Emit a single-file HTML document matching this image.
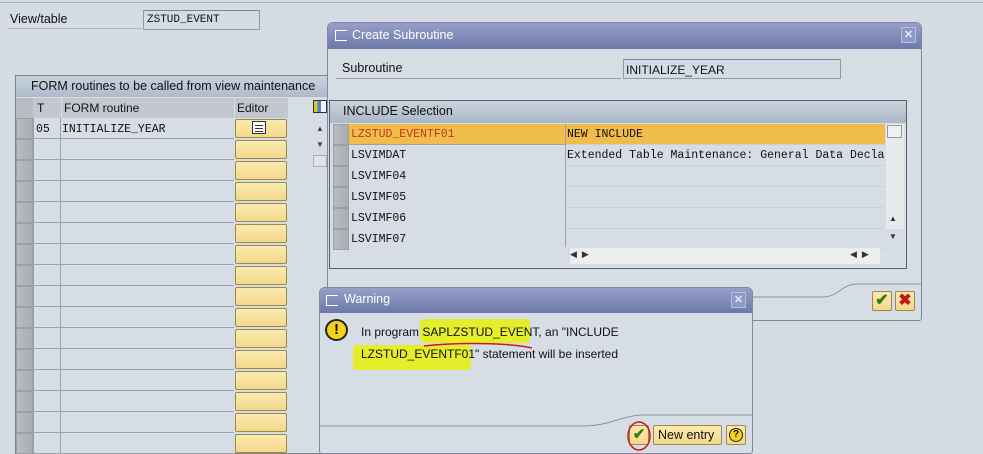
<!DOCTYPE html>
<html><head><style>
*{margin:0;padding:0;box-sizing:border-box}
body{width:983px;height:454px;overflow:hidden;background:#d5dce4;font-family:"Liberation Sans",Arial,sans-serif;font-size:12px;color:#111;position:relative}
.a{position:absolute}
.mono{font-family:"Liberation Mono","Courier New",monospace;font-size:11.5px}
.inp{background:#d3dde6;border:1px solid #8e99a4;border-top-color:#7d8893}
.ybtn{background:linear-gradient(#fbeaaf,#f3d98a);border:1px solid #9a8a50;border-radius:2px}
.sel{background:linear-gradient(90deg,#b9bcc0,#a9adb2);border:1px solid #9aa0a6}
.tb{background:linear-gradient(#97a0c8,#6e78a8);color:#fff;font-size:12.5px}
.x{background:#8f99c5;border:1px solid #b8c0e0;color:#e6eaf6;font-size:11px;text-align:center;line-height:14px;font-weight:bold}
</style></head><body>
<div class="a" style="left:0;top:2px;width:983px;height:1px;background:#aab2bb"></div>
<div class="a" style="left:10px;top:12px;font-size:12.5px">View/table</div>
<div class="a" style="left:8px;top:28px;width:134px;height:1px;background:#b0b8c0"></div>
<div class="a inp mono" style="left:143px;top:10px;width:117px;height:20px;padding:3px 3px;font-size:11px">ZSTUD_EVENT</div>

<!-- left table -->
<div class="a" style="left:15px;top:75px;width:320px;height:379px;border:1px solid #7a848f;background:#d6dde5"></div>
<div class="a" style="left:16px;top:76px;width:318px;height:21px;background:linear-gradient(#c9d3de,#aebbc9);padding:3px 15px;font-size:12.5px">FORM routines to be called from view maintenance</div>
<div class="a" style="left:16px;top:98px;width:17px;height:20px;background:#b8bcc2"></div>
<div class="a" style="left:33px;top:98px;width:28px;height:20px;background:#c3c8ce;padding:3px 4px">T</div>
<div class="a" style="left:61px;top:98px;width:173px;height:20px;background:#c3c8ce;padding:3px 2px;border-left:1px solid #d8dce0">FORM routine</div>
<div class="a" style="left:234px;top:98px;width:54px;height:20px;background:#c3c8ce;padding:3px 2px;border-left:1px solid #d8dce0">Editor</div>
<div class="a" style="left:33px;top:118px;width:1px;height:336px;background:#9aa3ad"></div>
<div class="a" style="left:60px;top:118px;width:1px;height:336px;background:#9aa3ad"></div>
<div id="rows"></div>
<div class="a mono" style="left:36px;top:123px">05</div>
<div class="a mono" style="left:62px;top:123px">INITIALIZE_YEAR</div>
<div class="a" style="left:252px;top:121px;width:14px;height:13px;border:1px solid #333;background:#fff"><div style="margin:3px 2px;height:1px;background:#334;box-shadow:0 3px 0 #334,0 6px 0 #334"></div></div>
<div class="a" style="left:313px;top:100px;width:14px;height:13px;background:linear-gradient(90deg,#e6c02a 0 30%,#4a86c8 30% 60%,#f2f2f2 60%);border:1px solid #333"></div>
<div class="a" style="left:316px;top:124px;font-size:8px;color:#444">▲</div>
<div class="a" style="left:316px;top:140px;font-size:8px;color:#444">▼</div>
<div class="a" style="left:313px;top:155px;width:14px;height:12px;border:1px solid #aab;background:#dfe4ea"></div>

<!-- Create Subroutine dialog -->
<div class="a" style="left:327px;top:22px;width:595px;height:299px;background:#d6dde5;border:1px solid #7e87a6;border-radius:6px 6px 3px 3px;overflow:hidden">
 <div class="a tb" style="left:0;top:0;width:595px;height:26px;padding:5px 24px">Create Subroutine</div>
 <div class="a" style="left:7px;top:7px;width:12px;height:11px;border:1px solid #fff;border-right:none"></div>
 <div class="a x" style="left:573px;top:4px;width:15px;height:16px">✕</div>
 <div class="a" style="left:14px;top:38px;font-size:12.5px">Subroutine</div>
 <div class="a" style="left:8px;top:55px;width:285px;height:1px;background:#98a2ac"></div>
 <div class="a inp" style="left:295px;top:36px;width:218px;height:20px;padding:3px 2px;font-size:12px">INITIALIZE_YEAR</div>
 <div class="a" style="left:1px;top:77px;width:578px;height:169px;border:1px solid #56606a;background:#d6dde5">
  <div class="a" style="left:0;top:0;width:576px;height:22px;background:linear-gradient(#c9d3de,#aab7c5);padding:3px 13px;font-size:12.5px">INCLUDE Selection</div>
  <div id="inc"></div>
 </div>
 <svg class="a" style="left:0;top:255px" width="595" height="30"><path d="M0 19 H494 C512 19 512 6 530 6 H595" fill="none" stroke="#8a949e"/></svg>
 <div class="a ybtn" style="left:544px;top:268px;width:20px;height:20px;color:#3a7a10;font-size:16px;line-height:17px;text-align:center;font-weight:bold">✔</div>
 <div class="a ybtn" style="left:567px;top:268px;width:20px;height:20px;color:#c01818;font-size:16px;line-height:17px;text-align:center;font-weight:bold">✖</div>
</div>

<!-- Warning dialog -->
<div class="a" style="left:319px;top:287px;width:434px;height:167px;background:#d6dde5;border:1px solid #7e87a6;border-radius:6px 6px 3px 3px;overflow:hidden">
 <div class="a tb" style="left:0;top:0;width:434px;height:25px;padding:4px 24px">Warning</div>
 <div class="a" style="left:6px;top:7px;width:12px;height:11px;border:1px solid #fff;border-right:none"></div>
 <div class="a x" style="left:411px;top:4px;width:15px;height:16px">✕</div>
 <div class="a" style="left:5px;top:31px;width:23px;height:22px;border-radius:50%;background:#f2d21c;border:2px solid #222;text-align:center;font-weight:bold;font-size:15px;line-height:18px">!</div>
 <div class="a" style="left:100px;top:31px;width:110px;height:24px;background:#e4ee2a;border-radius:4px"></div>
 <div class="a" style="left:33px;top:57px;width:118px;height:25px;background:#e4ee2a;border-radius:4px"></div>
 <div class="a" style="left:41px;top:37px;font-size:12px">In program SAPLZSTUD_EVENT, an "INCLUDE</div>
 <svg class="a" style="left:100px;top:44px" width="130" height="20"><path d="M4 14 C40 10 90 11 112 16" fill="none" stroke="#d01818" stroke-width="1.5"/></svg>
 <div class="a" style="left:41px;top:59px;font-size:12px">LZSTUD_EVENTF01" statement will be inserted</div>
 <svg class="a" style="left:0;top:116px" width="434" height="30"><path d="M0 22 H262 C292 22 300 11 325 11 H434" fill="none" stroke="#8a949e"/></svg>
 <div class="a ybtn" style="left:309px;top:137px;width:20px;height:20px;color:#3a7a10;font-size:15px;line-height:17px;text-align:center;font-weight:bold">✔</div>
 <svg class="a" style="left:304px;top:131px" width="30" height="34"><ellipse cx="15" cy="17" rx="11" ry="14" fill="none" stroke="#d01818" stroke-width="1.5"/></svg>
 <div class="a ybtn" style="left:333px;top:137px;width:69px;height:20px;padding:2px 4px;font-size:12.5px">New entry</div>
 <div class="a ybtn" style="left:406px;top:137px;width:20px;height:20px;text-align:center"><div style="margin:2px auto;width:14px;height:14px;border-radius:50%;background:#f2d21c;border:1px solid #222;font-size:10px;line-height:12px;font-weight:bold">?</div></div>
</div>

<script>
var r='';
for(var i=0;i<16;i++){var y=118+i*21;
r+='<div class="a sel" style="left:16px;top:'+y+'px;width:17px;height:21px"></div>';
r+='<div class="a" style="left:34px;top:'+(y+20)+'px;width:200px;height:1px;background:#9aa3ad"></div>';
r+='<div class="a ybtn" style="left:235px;top:'+(y+1)+'px;width:52px;height:19px"></div>';}
document.getElementById('rows').innerHTML=r;
var n=['LZSTUD_EVENTF01','LSVIMDAT','LSVIMF04','LSVIMF05','LSVIMF06','LSVIMF07'];
var s='';
for(var i=0;i<6;i++){var y=23+i*21;
s+='<div class="a sel" style="left:3px;top:'+y+'px;width:16px;height:21px"></div>';
if(i==0)s+='<div class="a" style="left:19px;top:'+y+'px;width:536px;height:21px;background:#f0bc4c"></div>';
s+='<div class="a mono" style="left:21px;top:'+(y+4)+'px;'+(i==0?'color:#c03a18':'')+'">'+n[i]+'</div>';
s+='<div class="a" style="left:236px;top:'+(y+20)+'px;width:318px;height:1px;background:#c9d0d8"></div>';}
s+='<div class="a" style="left:19px;top:43px;width:216px;height:1px;background:#9aa3ad"></div>';
s+='<div class="a" style="left:235px;top:23px;width:1px;height:123px;background:#9aa3ad"></div>';
s+='<div class="a mono" style="left:237px;top:27px">NEW INCLUDE</div>';
s+='<div class="a mono" style="left:237px;top:48px;width:317px;overflow:hidden;white-space:nowrap">Extended Table Maintenance: General Data Declarations</div>';
s+='<div class="a" style="left:556px;top:23px;width:18px;height:105px;background:#e8ebee"></div>';
s+='<div class="a" style="left:557px;top:24px;width:15px;height:13px;border:1px solid #999;background:#eef0f3"></div>';
s+='<div class="a" style="left:559px;top:113px;font-size:8px;color:#333">▲</div>';
s+='<div class="a" style="left:559px;top:131px;font-size:8px;color:#333">▼</div>';
s+='<div class="a" style="left:240px;top:147px;width:310px;height:16px;background:#eceef0"></div>';
s+='<div class="a" style="left:240px;top:148px;font-size:9px;color:#333">◀ &nbsp;▶</div>';
s+='<div class="a" style="left:520px;top:148px;font-size:9px;color:#333">◀ &nbsp;▶</div>';
document.getElementById('inc').innerHTML=s;
</script>
</body></html>
